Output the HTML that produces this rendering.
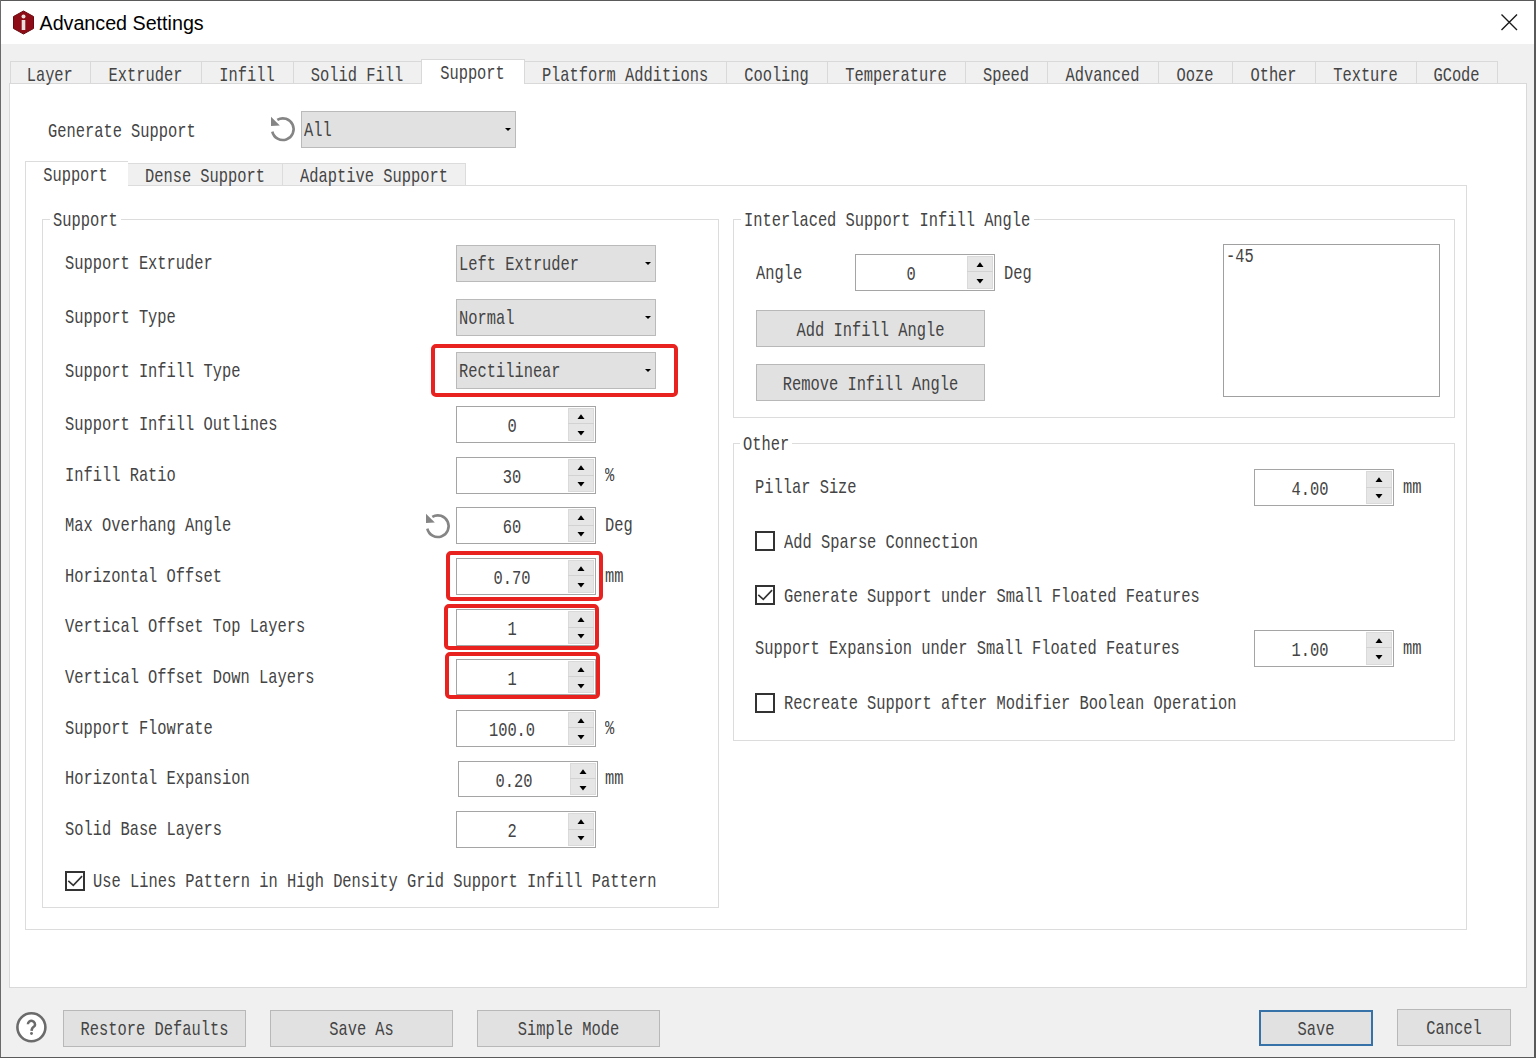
<!DOCTYPE html><html><head><meta charset="utf-8"><style>
html,body{margin:0;padding:0;width:1536px;height:1061px;overflow:hidden;background:#fff;position:relative}
.b{position:absolute}
.t{position:absolute;font-family:"Liberation Mono",monospace;font-size:15.4px;line-height:20px;color:#444;white-space:pre;transform:scaleY(1.27);transform-origin:0 14px}
</style></head><body>
<div class="b" style="left:0px;top:0px;width:1536px;height:1058px;background:#f0f0f0"></div>
<div class="b" style="left:1px;top:1px;width:1533px;height:43px;background:#fff"></div>
<div class="b" style="left:0px;top:0px;width:1536px;height:1px;background:#5a5a5a"></div>
<div class="b" style="left:0px;top:0px;width:1px;height:1058px;background:#6a6a6a"></div>
<div class="b" style="left:1534px;top:0px;width:2px;height:1058px;background:#5a5a5a"></div>
<div class="b" style="left:0px;top:1057px;width:1536px;height:1px;background:#5a5a5a"></div>
<svg class="b" style="left:12px;top:10px" width="23" height="25" viewBox="0 0 23 25">
<path d="M11.5 1 L21.5 6.5 L21.5 18.5 L11.5 24 L1.5 18.5 L1.5 6.5 Z" fill="#8e0c16" stroke="#6a0a10" stroke-width="1"/>
<rect x="9.7" y="10" width="3.6" height="10" fill="#e8e0dc"/>
<circle cx="11.5" cy="6.6" r="2" fill="#e8e0dc"/>
</svg>
<div class="b" style="left:39.5px;top:9.5px;font-family:'Liberation Sans',sans-serif;font-size:19.7px;line-height:26px;color:#000;white-space:pre">Advanced Settings</div>
<svg class="b" style="left:1500px;top:13px" width="19" height="19"><path d="M1.5 1.5 L17 17 M17 1.5 L1.5 17" stroke="#1a1a1a" stroke-width="1.4"/></svg>
<div class="b" style="left:9px;top:83px;width:1518px;height:905px;background:#fff;border:1px solid #d9d9d9;box-sizing:border-box"></div>
<div class="b" style="left:9.5px;top:61px;width:81.5px;height:23px;background:#f0f0f0;border:1px solid #d9d9d9;box-sizing:border-box"></div>
<div class="t" style="left:9.5px;top:67px;width:80.5px;text-align:center">Layer</div>
<div class="b" style="left:90px;top:61px;width:112px;height:23px;background:#f0f0f0;border:1px solid #d9d9d9;box-sizing:border-box"></div>
<div class="t" style="left:90px;top:67px;width:111px;text-align:center">Extruder</div>
<div class="b" style="left:201px;top:61px;width:93px;height:23px;background:#f0f0f0;border:1px solid #d9d9d9;box-sizing:border-box"></div>
<div class="t" style="left:201px;top:67px;width:92px;text-align:center">Infill</div>
<div class="b" style="left:293px;top:61px;width:129px;height:23px;background:#f0f0f0;border:1px solid #d9d9d9;box-sizing:border-box"></div>
<div class="t" style="left:293px;top:67px;width:128px;text-align:center">Solid Fill</div>
<div class="b" style="left:524px;top:61px;width:203px;height:23px;background:#f0f0f0;border:1px solid #d9d9d9;box-sizing:border-box"></div>
<div class="t" style="left:524px;top:67px;width:202px;text-align:center">Platform Additions</div>
<div class="b" style="left:726px;top:61px;width:102px;height:23px;background:#f0f0f0;border:1px solid #d9d9d9;box-sizing:border-box"></div>
<div class="t" style="left:726px;top:67px;width:101px;text-align:center">Cooling</div>
<div class="b" style="left:827px;top:61px;width:139px;height:23px;background:#f0f0f0;border:1px solid #d9d9d9;box-sizing:border-box"></div>
<div class="t" style="left:827px;top:67px;width:138px;text-align:center">Temperature</div>
<div class="b" style="left:965px;top:61px;width:83px;height:23px;background:#f0f0f0;border:1px solid #d9d9d9;box-sizing:border-box"></div>
<div class="t" style="left:965px;top:67px;width:82px;text-align:center">Speed</div>
<div class="b" style="left:1047px;top:61px;width:112px;height:23px;background:#f0f0f0;border:1px solid #d9d9d9;box-sizing:border-box"></div>
<div class="t" style="left:1047px;top:67px;width:111px;text-align:center">Advanced</div>
<div class="b" style="left:1158px;top:61px;width:75px;height:23px;background:#f0f0f0;border:1px solid #d9d9d9;box-sizing:border-box"></div>
<div class="t" style="left:1158px;top:67px;width:74px;text-align:center">Ooze</div>
<div class="b" style="left:1232px;top:61px;width:84px;height:23px;background:#f0f0f0;border:1px solid #d9d9d9;box-sizing:border-box"></div>
<div class="t" style="left:1232px;top:67px;width:83px;text-align:center">Other</div>
<div class="b" style="left:1315px;top:61px;width:102px;height:23px;background:#f0f0f0;border:1px solid #d9d9d9;box-sizing:border-box"></div>
<div class="t" style="left:1315px;top:67px;width:101px;text-align:center">Texture</div>
<div class="b" style="left:1416px;top:61px;width:82px;height:23px;background:#f0f0f0;border:1px solid #d9d9d9;box-sizing:border-box"></div>
<div class="t" style="left:1416px;top:67px;width:81px;text-align:center">GCode</div>
<div class="b" style="left:421px;top:59px;width:104px;height:25px;background:#fff;border:1px solid #d9d9d9;border-bottom:none;box-sizing:border-box"></div>
<div class="t" style="left:421px;top:65px;width:103px;text-align:center">Support</div>
<div class="t" style="left:48px;top:123px;">Generate Support</div>
<svg class="b" style="left:262px;top:110px" width="40" height="40" viewBox="0 0 40 40">
<path d="M 10.3 21.6 A 10.8 10.8 0 1 0 15.3 9.9" fill="none" stroke="#858585" stroke-width="2.6"/>
<path d="M 9 6.8 L 9 16 L 17.8 15.5 Z" fill="#858585"/></svg>
<div class="b" style="left:301px;top:111px;width:215px;height:37px;background:#e1e1e1;border:1px solid #bababa;box-sizing:border-box"></div>
<div class="t" style="left:304px;top:122px;">All</div>
<div class="b" style="left:505px;top:128px;width:0;height:0;border-left:3px solid transparent;border-right:3px solid transparent;border-top:3px solid #000"></div>
<div class="b" style="left:25px;top:185px;width:1442px;height:745px;background:#fff;border:1px solid #dcdcdc;box-sizing:border-box"></div>
<div class="b" style="left:127px;top:163px;width:156px;height:23px;background:#f0f0f0;border:1px solid #dcdcdc;box-sizing:border-box"></div>
<div class="t" style="left:127px;top:168px;width:156px;text-align:center">Dense Support</div>
<div class="b" style="left:282px;top:163px;width:184px;height:23px;background:#f0f0f0;border:1px solid #dcdcdc;box-sizing:border-box"></div>
<div class="t" style="left:282px;top:168px;width:184px;text-align:center">Adaptive Support</div>
<div class="b" style="left:25px;top:161px;width:103px;height:26px;background:#fff;border:1px solid #dcdcdc;border-bottom:none;border-right:none;box-sizing:border-box"></div>
<div class="t" style="left:25px;top:167px;width:101px;text-align:center">Support</div>
<div class="b" style="left:42px;top:219px;width:677px;height:689px;border:1px solid #dcdcdc;box-sizing:border-box"></div>
<div class="b" style="left:50px;top:217px;width:70.75px;height:5px;background:#fff"></div>
<div class="t" style="left:53px;top:212px;">Support</div>
<div class="t" style="left:65px;top:255px;">Support Extruder</div>
<div class="t" style="left:65px;top:309px;">Support Type</div>
<div class="t" style="left:65px;top:363px;">Support Infill Type</div>
<div class="t" style="left:65px;top:416px;">Support Infill Outlines</div>
<div class="t" style="left:65px;top:467px;">Infill Ratio</div>
<div class="t" style="left:65px;top:517px;">Max Overhang Angle</div>
<div class="t" style="left:65px;top:568px;">Horizontal Offset</div>
<div class="t" style="left:65px;top:618px;">Vertical Offset Top Layers</div>
<div class="t" style="left:65px;top:669px;">Vertical Offset Down Layers</div>
<div class="t" style="left:65px;top:720px;">Support Flowrate</div>
<div class="t" style="left:65px;top:770px;">Horizontal Expansion</div>
<div class="t" style="left:65px;top:821px;">Solid Base Layers</div>
<div class="b" style="left:456px;top:245px;width:200px;height:37px;background:#e1e1e1;border:1px solid #bababa;box-sizing:border-box"></div>
<div class="t" style="left:459px;top:256px;">Left Extruder</div>
<div class="b" style="left:645px;top:262px;width:0;height:0;border-left:3px solid transparent;border-right:3px solid transparent;border-top:3px solid #000"></div>
<div class="b" style="left:456px;top:299px;width:200px;height:37px;background:#e1e1e1;border:1px solid #bababa;box-sizing:border-box"></div>
<div class="t" style="left:459px;top:310px;">Normal</div>
<div class="b" style="left:645px;top:316px;width:0;height:0;border-left:3px solid transparent;border-right:3px solid transparent;border-top:3px solid #000"></div>
<div class="b" style="left:456px;top:352px;width:200px;height:37px;background:#e1e1e1;border:1px solid #bababa;box-sizing:border-box"></div>
<div class="t" style="left:459px;top:363px;">Rectilinear</div>
<div class="b" style="left:645px;top:369px;width:0;height:0;border-left:3px solid transparent;border-right:3px solid transparent;border-top:3px solid #000"></div>
<div class="b" style="left:431px;top:344px;width:247px;height:53px;border:4px solid #e8221f;border-radius:5px;box-sizing:border-box"></div>
<div class="b" style="left:456px;top:406px;width:140px;height:37px;background:#fff;border:1px solid #a5a5a5;box-sizing:border-box"></div>
<div class="b" style="left:568px;top:408px;width:26px;height:33px;background:#e6e6e6;border:1px solid #dadada;box-sizing:border-box"></div>
<div class="b" style="left:568px;top:423px;width:26px;height:1px;background:#d2d2d2"></div>
<svg class="b" style="left:577.3px;top:414px" width="8" height="5"><path d="M0.5 5 L4 0.3 L7.5 5 Z" fill="#000"/></svg>
<svg class="b" style="left:577.3px;top:431px" width="8" height="5"><path d="M0.5 0 L4 4.5 L7.5 0 Z" fill="#000"/></svg>
<div class="t" style="left:456px;top:417.5px;width:112px;text-align:center">0</div>
<div class="b" style="left:456px;top:457px;width:140px;height:37px;background:#fff;border:1px solid #a5a5a5;box-sizing:border-box"></div>
<div class="b" style="left:568px;top:459px;width:26px;height:33px;background:#e6e6e6;border:1px solid #dadada;box-sizing:border-box"></div>
<div class="b" style="left:568px;top:475px;width:26px;height:1px;background:#d2d2d2"></div>
<svg class="b" style="left:577.3px;top:465px" width="8" height="5"><path d="M0.5 5 L4 0.3 L7.5 5 Z" fill="#000"/></svg>
<svg class="b" style="left:577.3px;top:482px" width="8" height="5"><path d="M0.5 0 L4 4.5 L7.5 0 Z" fill="#000"/></svg>
<div class="t" style="left:456px;top:468.5px;width:112px;text-align:center">30</div>
<div class="t" style="left:605px;top:467px;">%</div>
<div class="b" style="left:456px;top:507px;width:140px;height:37px;background:#fff;border:1px solid #a5a5a5;box-sizing:border-box"></div>
<div class="b" style="left:568px;top:509px;width:26px;height:33px;background:#e6e6e6;border:1px solid #dadada;box-sizing:border-box"></div>
<div class="b" style="left:568px;top:525px;width:26px;height:1px;background:#d2d2d2"></div>
<svg class="b" style="left:577.3px;top:515px" width="8" height="5"><path d="M0.5 5 L4 0.3 L7.5 5 Z" fill="#000"/></svg>
<svg class="b" style="left:577.3px;top:532px" width="8" height="5"><path d="M0.5 0 L4 4.5 L7.5 0 Z" fill="#000"/></svg>
<div class="t" style="left:456px;top:518.5px;width:112px;text-align:center">60</div>
<div class="t" style="left:605px;top:517px;">Deg</div>
<svg class="b" style="left:416.7px;top:506.8px" width="40" height="40" viewBox="0 0 40 40">
<path d="M 10.3 21.6 A 10.8 10.8 0 1 0 15.3 9.9" fill="none" stroke="#858585" stroke-width="2.6"/>
<path d="M 9 6.8 L 9 16 L 17.8 15.5 Z" fill="#858585"/></svg>
<div class="b" style="left:456px;top:558px;width:140px;height:37px;background:#fff;border:1px solid #a5a5a5;box-sizing:border-box"></div>
<div class="b" style="left:568px;top:560px;width:26px;height:33px;background:#e6e6e6;border:1px solid #dadada;box-sizing:border-box"></div>
<div class="b" style="left:568px;top:575px;width:26px;height:1px;background:#d2d2d2"></div>
<svg class="b" style="left:577.3px;top:566px" width="8" height="5"><path d="M0.5 5 L4 0.3 L7.5 5 Z" fill="#000"/></svg>
<svg class="b" style="left:577.3px;top:583px" width="8" height="5"><path d="M0.5 0 L4 4.5 L7.5 0 Z" fill="#000"/></svg>
<div class="t" style="left:456px;top:569.5px;width:112px;text-align:center">0.70</div>
<div class="t" style="left:605px;top:568px;">mm</div>
<div class="b" style="left:446px;top:551px;width:157px;height:50px;border:4px solid #e8221f;border-radius:5px;box-sizing:border-box"></div>
<div class="b" style="left:456px;top:609px;width:140px;height:37px;background:#fff;border:1px solid #a5a5a5;box-sizing:border-box"></div>
<div class="b" style="left:568px;top:611px;width:26px;height:33px;background:#e6e6e6;border:1px solid #dadada;box-sizing:border-box"></div>
<div class="b" style="left:568px;top:627px;width:26px;height:1px;background:#d2d2d2"></div>
<svg class="b" style="left:577.3px;top:617px" width="8" height="5"><path d="M0.5 5 L4 0.3 L7.5 5 Z" fill="#000"/></svg>
<svg class="b" style="left:577.3px;top:634px" width="8" height="5"><path d="M0.5 0 L4 4.5 L7.5 0 Z" fill="#000"/></svg>
<div class="t" style="left:456px;top:620.5px;width:112px;text-align:center">1</div>
<div class="b" style="left:444px;top:604px;width:155px;height:46px;border:4px solid #e8221f;border-radius:5px;box-sizing:border-box"></div>
<div class="b" style="left:456px;top:659px;width:140px;height:36px;background:#fff;border:1px solid #a5a5a5;box-sizing:border-box"></div>
<div class="b" style="left:568px;top:661px;width:26px;height:32px;background:#e6e6e6;border:1px solid #dadada;box-sizing:border-box"></div>
<div class="b" style="left:568px;top:676px;width:26px;height:1px;background:#d2d2d2"></div>
<svg class="b" style="left:577.3px;top:667px" width="8" height="5"><path d="M0.5 5 L4 0.3 L7.5 5 Z" fill="#000"/></svg>
<svg class="b" style="left:577.3px;top:684px" width="8" height="5"><path d="M0.5 0 L4 4.5 L7.5 0 Z" fill="#000"/></svg>
<div class="t" style="left:456px;top:670.5px;width:112px;text-align:center">1</div>
<div class="b" style="left:445px;top:652px;width:155px;height:47px;border:4px solid #e8221f;border-radius:5px;box-sizing:border-box"></div>
<div class="b" style="left:456px;top:710px;width:140px;height:37px;background:#fff;border:1px solid #a5a5a5;box-sizing:border-box"></div>
<div class="b" style="left:568px;top:712px;width:26px;height:33px;background:#e6e6e6;border:1px solid #dadada;box-sizing:border-box"></div>
<div class="b" style="left:568px;top:727px;width:26px;height:1px;background:#d2d2d2"></div>
<svg class="b" style="left:577.3px;top:718px" width="8" height="5"><path d="M0.5 5 L4 0.3 L7.5 5 Z" fill="#000"/></svg>
<svg class="b" style="left:577.3px;top:735px" width="8" height="5"><path d="M0.5 0 L4 4.5 L7.5 0 Z" fill="#000"/></svg>
<div class="t" style="left:456px;top:721.5px;width:112px;text-align:center">100.0</div>
<div class="t" style="left:605px;top:720px;">%</div>
<div class="b" style="left:458px;top:761px;width:140px;height:36px;background:#fff;border:1px solid #a5a5a5;box-sizing:border-box"></div>
<div class="b" style="left:570px;top:763px;width:26px;height:32px;background:#e6e6e6;border:1px solid #dadada;box-sizing:border-box"></div>
<div class="b" style="left:570px;top:778px;width:26px;height:1px;background:#d2d2d2"></div>
<svg class="b" style="left:579.3px;top:769px" width="8" height="5"><path d="M0.5 5 L4 0.3 L7.5 5 Z" fill="#000"/></svg>
<svg class="b" style="left:579.3px;top:786px" width="8" height="5"><path d="M0.5 0 L4 4.5 L7.5 0 Z" fill="#000"/></svg>
<div class="t" style="left:458px;top:772.5px;width:112px;text-align:center">0.20</div>
<div class="t" style="left:605px;top:770px;">mm</div>
<div class="b" style="left:456px;top:811px;width:140px;height:37px;background:#fff;border:1px solid #a5a5a5;box-sizing:border-box"></div>
<div class="b" style="left:568px;top:813px;width:26px;height:33px;background:#e6e6e6;border:1px solid #dadada;box-sizing:border-box"></div>
<div class="b" style="left:568px;top:829px;width:26px;height:1px;background:#d2d2d2"></div>
<svg class="b" style="left:577.3px;top:819px" width="8" height="5"><path d="M0.5 5 L4 0.3 L7.5 5 Z" fill="#000"/></svg>
<svg class="b" style="left:577.3px;top:836px" width="8" height="5"><path d="M0.5 0 L4 4.5 L7.5 0 Z" fill="#000"/></svg>
<div class="t" style="left:456px;top:822.5px;width:112px;text-align:center">2</div>
<div class="b" style="left:65px;top:871px;width:20px;height:20px;border:2px solid #333;box-sizing:border-box;background:#fff"></div>
<svg class="b" style="left:65px;top:871px" width="20" height="20"><path d="M3.3 9.8 L8.3 14.4 L17.1 5.1" fill="none" stroke="#333" stroke-width="1.6"/></svg>
<div class="t" style="left:93px;top:873px;">Use Lines Pattern in High Density Grid Support Infill Pattern</div>
<div class="b" style="left:733px;top:219px;width:722px;height:199px;border:1px solid #dcdcdc;box-sizing:border-box"></div>
<div class="b" style="left:741px;top:217px;width:292.75px;height:5px;background:#fff"></div>
<div class="t" style="left:744px;top:212px;">Interlaced Support Infill Angle</div>
<div class="t" style="left:756px;top:265px;">Angle</div>
<div class="b" style="left:855px;top:254px;width:140px;height:37px;background:#fff;border:1px solid #a5a5a5;box-sizing:border-box"></div>
<div class="b" style="left:967px;top:256px;width:26px;height:33px;background:#e6e6e6;border:1px solid #dadada;box-sizing:border-box"></div>
<div class="b" style="left:967px;top:271px;width:26px;height:1px;background:#d2d2d2"></div>
<svg class="b" style="left:976.3px;top:262px" width="8" height="5"><path d="M0.5 5 L4 0.3 L7.5 5 Z" fill="#000"/></svg>
<svg class="b" style="left:976.3px;top:279px" width="8" height="5"><path d="M0.5 0 L4 4.5 L7.5 0 Z" fill="#000"/></svg>
<div class="t" style="left:855px;top:265.5px;width:112px;text-align:center">0</div>
<div class="t" style="left:1004px;top:265px;">Deg</div>
<div class="b" style="left:756px;top:310px;width:229px;height:37px;background:#e1e1e1;border:1px solid #b8b8b8;box-sizing:border-box"></div>
<div class="t" style="left:756px;top:321.5px;width:229px;text-align:center">Add Infill Angle</div>
<div class="b" style="left:756px;top:364px;width:229px;height:37px;background:#e1e1e1;border:1px solid #b8b8b8;box-sizing:border-box"></div>
<div class="t" style="left:756px;top:375.5px;width:229px;text-align:center">Remove Infill Angle</div>
<div class="b" style="left:1223px;top:244px;width:217px;height:153px;background:#fff;border:1px solid #a0a0a0;box-sizing:border-box"></div>
<div class="t" style="left:1226px;top:248px;">-45</div>
<div class="b" style="left:733px;top:443px;width:722px;height:298px;border:1px solid #dcdcdc;box-sizing:border-box"></div>
<div class="b" style="left:740px;top:441px;width:52.25px;height:5px;background:#fff"></div>
<div class="t" style="left:743px;top:436px;">Other</div>
<div class="t" style="left:755px;top:479px;">Pillar Size</div>
<div class="b" style="left:1254px;top:469px;width:140px;height:37px;background:#fff;border:1px solid #a5a5a5;box-sizing:border-box"></div>
<div class="b" style="left:1366px;top:471px;width:26px;height:33px;background:#e6e6e6;border:1px solid #dadada;box-sizing:border-box"></div>
<div class="b" style="left:1366px;top:487px;width:26px;height:1px;background:#d2d2d2"></div>
<svg class="b" style="left:1375.3px;top:477px" width="8" height="5"><path d="M0.5 5 L4 0.3 L7.5 5 Z" fill="#000"/></svg>
<svg class="b" style="left:1375.3px;top:494px" width="8" height="5"><path d="M0.5 0 L4 4.5 L7.5 0 Z" fill="#000"/></svg>
<div class="t" style="left:1254px;top:480.5px;width:112px;text-align:center">4.00</div>
<div class="t" style="left:1403px;top:479px;">mm</div>
<div class="b" style="left:755px;top:531px;width:20px;height:20px;border:2px solid #333;box-sizing:border-box;background:#fff"></div>
<div class="t" style="left:784px;top:534px;">Add Sparse Connection</div>
<div class="b" style="left:755px;top:585px;width:20px;height:20px;border:2px solid #333;box-sizing:border-box;background:#fff"></div>
<svg class="b" style="left:755px;top:585px" width="20" height="20"><path d="M3.3 9.8 L8.3 14.4 L17.1 5.1" fill="none" stroke="#333" stroke-width="1.6"/></svg>
<div class="t" style="left:784px;top:588px;">Generate Support under Small Floated Features</div>
<div class="t" style="left:755px;top:640px;">Support Expansion under Small Floated Features</div>
<div class="b" style="left:1254px;top:630px;width:140px;height:37px;background:#fff;border:1px solid #a5a5a5;box-sizing:border-box"></div>
<div class="b" style="left:1366px;top:632px;width:26px;height:33px;background:#e6e6e6;border:1px solid #dadada;box-sizing:border-box"></div>
<div class="b" style="left:1366px;top:647px;width:26px;height:1px;background:#d2d2d2"></div>
<svg class="b" style="left:1375.3px;top:638px" width="8" height="5"><path d="M0.5 5 L4 0.3 L7.5 5 Z" fill="#000"/></svg>
<svg class="b" style="left:1375.3px;top:655px" width="8" height="5"><path d="M0.5 0 L4 4.5 L7.5 0 Z" fill="#000"/></svg>
<div class="t" style="left:1254px;top:641.5px;width:112px;text-align:center">1.00</div>
<div class="t" style="left:1403px;top:640px;">mm</div>
<div class="b" style="left:755px;top:693px;width:20px;height:20px;border:2px solid #333;box-sizing:border-box;background:#fff"></div>
<div class="t" style="left:784px;top:695px;">Recreate Support after Modifier Boolean Operation</div>
<svg class="b" style="left:14px;top:1010px" width="36" height="36"><circle cx="17.4" cy="17.3" r="14" fill="#fff" stroke="#6b6b6b" stroke-width="2.6"/><path d="M 13.9 14.3 A 3.55 3.55 0 1 1 20.6 16 Q 17.6 17.8 17.5 20.9" fill="none" stroke="#6b6b6b" stroke-width="2.5"/><circle cx="17.5" cy="23.5" r="1.45" fill="#6b6b6b"/></svg>
<div class="b" style="left:63px;top:1010px;width:183px;height:37px;background:#e1e1e1;border:1px solid #b8b8b8;box-sizing:border-box"></div>
<div class="t" style="left:63px;top:1020.5px;width:183px;text-align:center">Restore Defaults</div>
<div class="b" style="left:270px;top:1010px;width:183px;height:37px;background:#e1e1e1;border:1px solid #b8b8b8;box-sizing:border-box"></div>
<div class="t" style="left:270px;top:1020.5px;width:183px;text-align:center">Save As</div>
<div class="b" style="left:477px;top:1010px;width:183px;height:37px;background:#e1e1e1;border:1px solid #b8b8b8;box-sizing:border-box"></div>
<div class="t" style="left:477px;top:1020.5px;width:183px;text-align:center">Simple Mode</div>
<div class="b" style="left:1259px;top:1010px;width:114px;height:36px;background:#e1e1e1;border:2px solid #3672a8;box-sizing:border-box"></div>
<div class="t" style="left:1259px;top:1020.5px;width:114px;text-align:center">Save</div>
<div class="b" style="left:1397px;top:1009px;width:114px;height:37px;background:#e1e1e1;border:1px solid #b8b8b8;box-sizing:border-box"></div>
<div class="t" style="left:1397px;top:1020.0px;width:114px;text-align:center">Cancel</div>
</body></html>
